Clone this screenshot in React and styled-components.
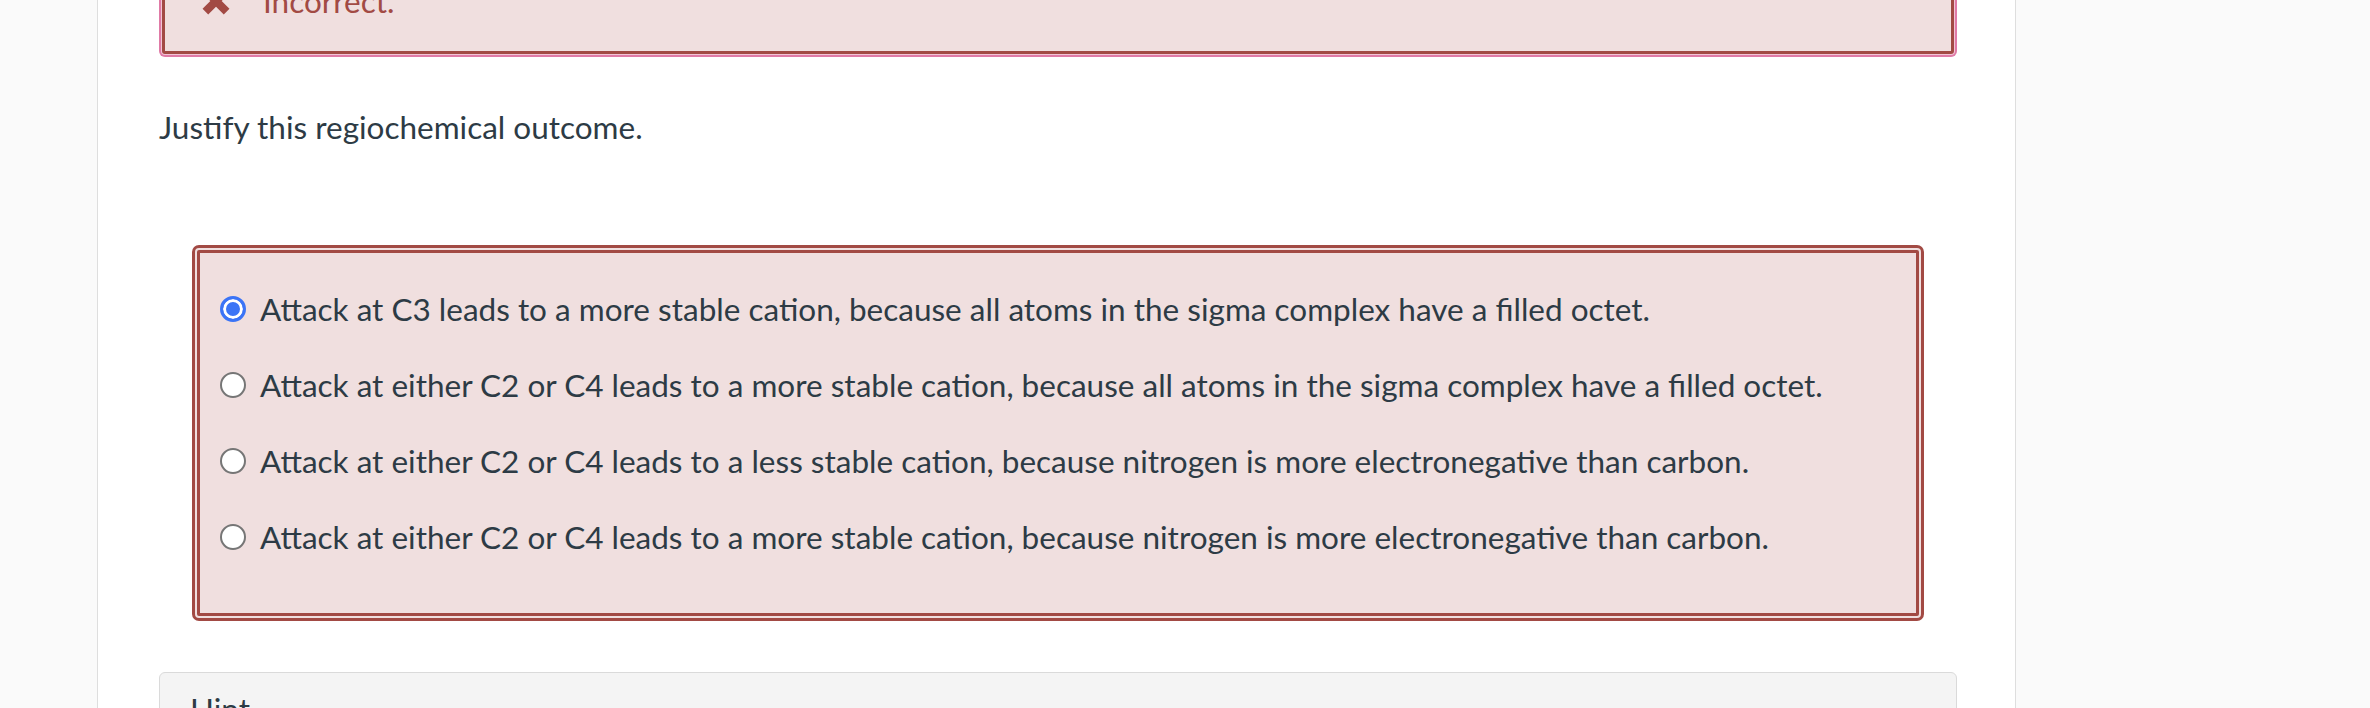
import React from "react";
import styled, { createGlobalStyle } from "styled-components";

const options = [
  "Attack at C3 leads to a more stable cation, because all atoms in the sigma complex have a filled octet.",
  "Attack at either C2 or C4 leads to a more stable cation, because all atoms in the sigma complex have a filled octet.",
  "Attack at either C2 or C4 leads to a less stable cation, because nitrogen is more electronegative than carbon.",
  "Attack at either C2 or C4 leads to a more stable cation, because nitrogen is more electronegative than carbon.",
];

const App = () => {
  return (
    <>
      <GlobalStyle />
      <Page>
        <Rail />
        <Main>
          <Feedback>
            <FeedbackIcon viewBox="0 0 24 24" aria-hidden="true">
              <path d="M2.5 6.5 6.5 2.5 12 8 17.5 2.5 21.5 6.5 16 12 21.5 17.5 17.5 21.5 12 16 6.5 21.5 2.5 17.5 8 12Z" />
            </FeedbackIcon>
            <FeedbackText>Incorrect.</FeedbackText>
          </Feedback>
          <Question>Justify this regiochemical outcome.</Question>
          <Answers>
            {options.map((text, i) => (
              <Answer key={i}>
                <Radio type="radio" name="answer" defaultChecked={i === 0} />
                <AnswerText>{text}</AnswerText>
              </Answer>
            ))}
          </Answers>
          <Hint>
            <HintTitle>Hint</HintTitle>
          </Hint>
        </Main>
        <SideArea />
      </Page>
    </>
  );
};

const GlobalStyle = createGlobalStyle`
  html, body {
    margin: 0;
    padding: 0;
    background: #fafafa;
    font-family: Lato, "Open Sans", sans-serif;
  }
`;

const Page = styled.div`
  display: flex;
  height: 708px;
  overflow: hidden;
  background: #fafafa;
`;

const Rail = styled.div`
  flex: none;
  width: 97px;
  border-right: 1px solid #dedede;
`;

const Main = styled.div`
  flex: none;
  width: 1918px;
  box-sizing: border-box;
  padding: 0 58px 0 61px;
  background: #fff;
  border-right: 1px solid #dedede;
`;

const SideArea = styled.div`
  flex: 1;
`;

const Feedback = styled.div`
  display: flex;
  align-items: center;
  margin: -52px 3px 0;
  padding: 30px 34px;
  background: #f0dfdf;
  border: 3px solid #a24a44;
  border-radius: 3px;
  box-shadow: 0 0 0 1px #f3c4d6, 0 0 0 3px #e07aa6;
`;

const FeedbackIcon = styled.svg`
  width: 34px;
  height: 34px;
  fill: #a24a44;
  margin-right: 30px;
  flex: none;
`;

const FeedbackText = styled.span`
  font-size: 31.5px;
  line-height: 40px;
  color: #a24a44;
`;

const Question = styled.p`
  margin: 53px 0 0;
  font-size: 31.5px;
  line-height: 40px;
  color: #2d3b45;
`;

const Answers = styled.div`
  margin: 98px 33px 0;
  padding: 18px 20px 38px;
  background: #f0dfdf;
  border: 8px double #a24a44;
  border-radius: 7px;
`;

const Answer = styled.label`
  display: flex;
  align-items: center;
  height: 76px;
  gap: 14px;
`;

const Radio = styled.input`
  appearance: none;
  margin: 0;
  flex: none;
  width: 26px;
  height: 26px;
  border-radius: 50%;
  border: 2px solid #767676;
  background: #fff;
  box-sizing: border-box;

  &:checked {
    border: 3px solid #3b74f6;
    background: #3b74f6;
    box-shadow: inset 0 0 0 3px #fff;
  }
`;

const AnswerText = styled.span`
  font-size: 31.5px;
  line-height: 40px;
  color: #2d3b45;
`;

const Hint = styled.div`
  margin-top: 51px;
  padding: 16px 30px;
  background: #f4f4f4;
  border: 1px solid #dadada;
  border-radius: 6px;
`;

const HintTitle = styled.div`
  font-size: 31.5px;
  line-height: 40px;
  color: #2d3b45;
`;

export default App;
